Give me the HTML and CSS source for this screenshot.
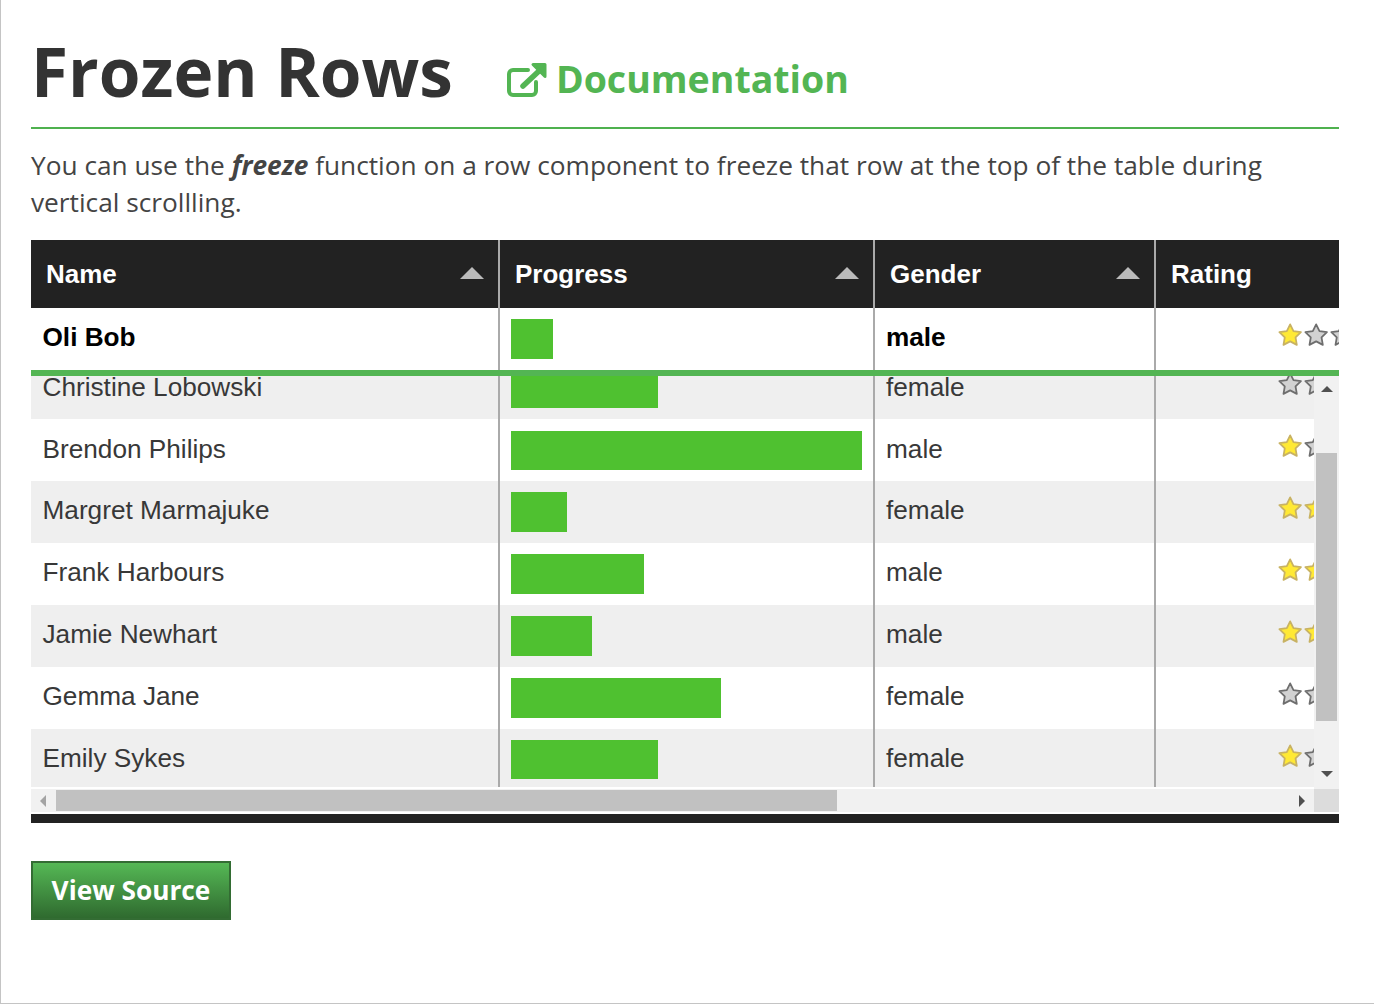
FILE: index.html
```html
<!DOCTYPE html>
<html lang="en">
<head>
    <meta charset="UTF-8">
    <title>Frozen Rows</title>
    <link rel="stylesheet" href="styles.css">
</head>
<body>
    <svg class="defs" width="0" height="0">
        <symbol id="star-on" viewBox="0 0 512 512"><polygon fill="#FFE935" stroke="#C8B263" stroke-width="37.6" stroke-linejoin="round" points="259.2,29.9 330.3,173.9 489.2,197 374.2,309.1 401.3,467.3 259.2,392.6 117.1,467.3 144.3,309.1 29.3,197 188.2,173.9"/></symbol>
        <symbol id="star-off" viewBox="0 0 512 512"><polygon fill="#D2D2D2" stroke="#6e6e6e" stroke-width="37.6" stroke-linejoin="round" points="259.2,29.9 330.3,173.9 489.2,197 374.2,309.1 401.3,467.3 259.2,392.6 117.1,467.3 144.3,309.1 29.3,197 188.2,173.9"/></symbol>
    </svg>

    <div class="container">
        <div class="header">
            <h1>Frozen Rows</h1>
            <a class="doc-link" href="#">
                <svg class="doc-icon" viewBox="0 0 40 36" width="40" height="36"><path d="M21 9H6A4 4 0 0 0 2 13V30A4 4 0 0 0 6 34H25A4 4 0 0 0 29 30V21" fill="none" stroke="currentColor" stroke-width="4" stroke-linecap="round"/><path d="M16 25 32 10" fill="none" stroke="currentColor" stroke-width="5.500" stroke-linecap="round"/><path d="M26 3.500H38V15.500Z" fill="currentColor" stroke="currentColor" stroke-width="3" stroke-linejoin="round"/></svg>
                Documentation
            </a>
        </div>

        <p class="intro">You can use the <strong><em>freeze</em></strong> function on a row component to freeze that row at the top of the table during vertical scrollling.</p>

        <div class="table">
            <div class="table-head">
                <div class="col col-name">Name<span class="sort"></span></div>
                <div class="col col-progress">Progress<span class="sort"></span></div>
                <div class="col col-gender">Gender<span class="sort"></span></div>
                <div class="col col-rating">Rating</div>
            </div>

            <div class="row row-frozen">
                <div class="cell col-name">Oli Bob</div>
                <div class="cell col-progress"><div class="bar" style="width: 42px"></div></div>
                <div class="cell col-gender">male</div>
                <div class="cell col-rating"><div class="stars"><svg><use href="#star-on"/></svg><svg><use href="#star-off"/></svg><svg><use href="#star-off"/></svg></div></div>
            </div>

            <div class="table-body">
                <div class="rows">
                    <div class="rows-inner">
                        <div class="row row-even">
                            <div class="cell col-name">Christine Lobowski</div>
                            <div class="cell col-progress"><div class="bar" style="width: 147px"></div></div>
                            <div class="cell col-gender">female</div>
                            <div class="cell col-rating"><div class="stars"><svg><use href="#star-off"/></svg><svg><use href="#star-off"/></svg></div></div>
                        </div>
                        <div class="row">
                            <div class="cell col-name">Brendon Philips</div>
                            <div class="cell col-progress"><div class="bar" style="width: 351px"></div></div>
                            <div class="cell col-gender">male</div>
                            <div class="cell col-rating"><div class="stars"><svg><use href="#star-on"/></svg><svg><use href="#star-off"/></svg></div></div>
                        </div>
                        <div class="row row-even">
                            <div class="cell col-name">Margret Marmajuke</div>
                            <div class="cell col-progress"><div class="bar" style="width: 56px"></div></div>
                            <div class="cell col-gender">female</div>
                            <div class="cell col-rating"><div class="stars"><svg><use href="#star-on"/></svg><svg><use href="#star-on"/></svg></div></div>
                        </div>
                        <div class="row">
                            <div class="cell col-name">Frank Harbours</div>
                            <div class="cell col-progress"><div class="bar" style="width: 133px"></div></div>
                            <div class="cell col-gender">male</div>
                            <div class="cell col-rating"><div class="stars"><svg><use href="#star-on"/></svg><svg><use href="#star-on"/></svg></div></div>
                        </div>
                        <div class="row row-even">
                            <div class="cell col-name">Jamie Newhart</div>
                            <div class="cell col-progress"><div class="bar" style="width: 81px"></div></div>
                            <div class="cell col-gender">male</div>
                            <div class="cell col-rating"><div class="stars"><svg><use href="#star-on"/></svg><svg><use href="#star-on"/></svg></div></div>
                        </div>
                        <div class="row">
                            <div class="cell col-name">Gemma Jane</div>
                            <div class="cell col-progress"><div class="bar" style="width: 210px"></div></div>
                            <div class="cell col-gender">female</div>
                            <div class="cell col-rating"><div class="stars"><svg><use href="#star-off"/></svg><svg><use href="#star-off"/></svg></div></div>
                        </div>
                        <div class="row row-even">
                            <div class="cell col-name">Emily Sykes</div>
                            <div class="cell col-progress"><div class="bar" style="width: 147px"></div></div>
                            <div class="cell col-gender">female</div>
                            <div class="cell col-rating"><div class="stars"><svg><use href="#star-on"/></svg><svg><use href="#star-off"/></svg></div></div>
                        </div>
                    </div>
                    <div class="hscroll">
                        <span class="arrow arrow-left"></span>
                        <div class="hscroll-track"><div class="hscroll-thumb"></div></div>
                        <span class="arrow arrow-right"></span>
                    </div>
                </div>
                <div class="vscroll">
                    <span class="arrow arrow-up"></span>
                    <div class="vscroll-track"><div class="vscroll-thumb"></div></div>
                    <span class="arrow arrow-down"></span>
                    <div class="vscroll-corner"></div>
                </div>
            </div>
            <div class="table-foot"></div>
        </div>

        <a class="source-btn" href="#">View Source</a>
    </div>
</body>
</html>
```

FILE: styles.css
```css
* {
    margin: 0;
    padding: 0;
    box-sizing: border-box;
}

html, body {
    height: 100%;
}

body {
    background: #fff;
    overflow: hidden;
    font-family: "Open Sans", sans-serif;
    color: #333;
}

.defs {
    position: absolute;
}

.container {
    height: 1004px;
    padding: 0 35px 0 30px;
    border-left: 1px solid #c4c4c4;
    border-bottom: 1px solid #c4c4c4;
}

.header {
    display: flex;
    align-items: baseline;
    height: 129px;
    border-bottom: 2px solid #4fb14f;
}

.header h1 {
    font-size: 67.5px;
    font-weight: 700;
    line-height: 142px;
    color: #333;
}

.doc-link {
    display: inline-flex;
    align-items: center;
    gap: 9px;
    margin-left: 54px;
    color: #53b553;
    font-size: 37.5px;
    font-weight: 700;
    text-decoration: none;
}

.doc-icon {
    flex: none;
    margin-top: 2px;
}

.intro {
    margin-top: 18px;
    font-size: 26.25px;
    line-height: 37px;
    color: #444;
}

.table {
    margin-top: 19px;
    font-family: "Liberation Sans", Arial, sans-serif;
    font-size: 26px;
}

.table-head {
    display: flex;
    height: 68px;
    background: #222;
    color: #fff;
    font-weight: 700;
}

.col {
    position: relative;
    display: flex;
    align-items: center;
    padding-left: 15px;
    border-right: 2px solid #aaa;
}

.col-name {
    flex: none;
    width: 469px;
}

.col-progress {
    flex: none;
    width: 375px;
}

.col-gender {
    flex: none;
    width: 281px;
}

.col-rating {
    flex: none;
    width: 220px;
    border-right: none;
}

.sort {
    position: absolute;
    right: 14px;
    top: 27px;
    border-left: 12px solid transparent;
    border-right: 12px solid transparent;
    border-bottom: 12px solid #bbb;
}

.row {
    display: flex;
    flex: none;
    height: 62px;
    background: #fff;
    color: #383838;
    font-size: 26.2px;
}

.rows-inner .row {
    height: 61.9px;
}

.row-even {
    background: #efefef;
}

.row-frozen {
    overflow: hidden;
    border-bottom: 6px solid #53b553;
    height: 68px;
    color: #000;
    font-weight: 700;
}

.cell {
    display: flex;
    align-items: center;
    padding: 0 11px;
    border-right: 2px solid #aaa;
}

.cell.col-name {
    padding: 0 11px 4px 11.5px;
}

.cell.col-gender {
    padding-bottom: 4px;
}

.rows-inner .cell.col-name,
.rows-inner .cell.col-gender {
    padding-bottom: 2.4px;
}

.cell.col-rating {
    border-right: none;
}

.bar {
    height: 39.4px;
    background: #4fc130;
}

.stars {
    display: flex;
    flex: none;
    gap: 2px;
    margin: -8px 0 0 111px;
}

.stars svg {
    flex: none;
    width: 24px;
    height: 24px;
}

.table-body {
    display: flex;
    height: 438px;
}

.rows {
    flex: none;
    width: 1283px;
    display: flex;
    flex-direction: column;
    overflow: hidden;
}

.rows-inner {
    flex: none;
    height: 411px;
    overflow: hidden;
}

.rows-inner .row:first-child {
    margin-top: -18.6px;
}

.hscroll {
    display: flex;
    align-items: center;
    height: 27px;
    background: #f1f1f1;
    border-top: 2px solid #fff;
    border-bottom: 2px solid #fff;
}

.hscroll-track {
    flex: 1;
}

.hscroll-thumb {
    width: 781px;
    height: 21px;
    background: #c1c1c1;
}

.arrow {
    flex: none;
    width: 0;
    height: 0;
}

.arrow-left {
    margin: 0 10px 0 9px;
    border-top: 6px solid transparent;
    border-bottom: 6px solid transparent;
    border-right: 6px solid #a3a3a3;
}

.arrow-right {
    margin: 0 9px 0 0;
    border-top: 6px solid transparent;
    border-bottom: 6px solid transparent;
    border-left: 6px solid #505050;
}

.vscroll {
    flex: none;
    width: 25px;
    display: flex;
    flex-direction: column;
    align-items: center;
    background: #f1f1f1;
}

.arrow-up {
    margin: 10px 0 5px;
    border-left: 6px solid transparent;
    border-right: 6px solid transparent;
    border-bottom: 6px solid #505050;
}

.arrow-down {
    margin: 5px 0 12px;
    border-left: 6px solid transparent;
    border-right: 6px solid transparent;
    border-top: 6px solid #505050;
}

.vscroll-track {
    flex: 1;
    width: 100%;
    padding: 56px 2px 0;
}

.vscroll-thumb {
    height: 268px;
    background: #c1c1c1;
}

.vscroll-corner {
    flex: none;
    width: 100%;
    height: 25px;
    background: #dcdcdc;
    border-bottom: 2px solid #fff;
}

.table-foot {
    height: 9px;
    background: #222;
}

.source-btn {
    display: inline-block;
    width: 200px;
    height: 59px;
    margin-top: 38px;
    border: 2px solid #336c33;
    background: linear-gradient(to bottom, #55b855, #2f6a2f);
    color: #fff;
    font-size: 26.25px;
    font-weight: 700;
    line-height: 55px;
    text-align: center;
    text-decoration: none;
}
```
